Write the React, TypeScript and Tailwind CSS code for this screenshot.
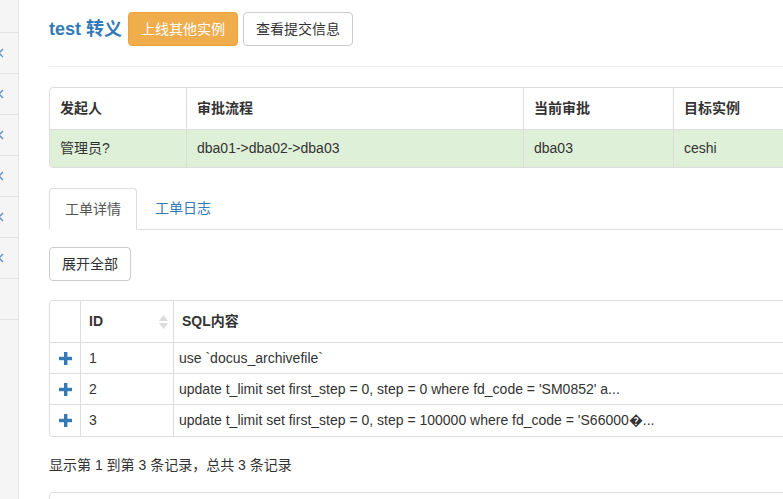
import React from "react";

const font = { fontFamily: '"Liberation Sans", Arial, "Noto Sans CJK SC", sans-serif' };

function Plus() {
  return (
    <svg width="13" height="13" viewBox="0 0 13 13">
      <rect x="5" y="0" width="3.4" height="13" fill="#337ab7" />
      <rect x="0" y="4.8" width="13" height="3.4" fill="#337ab7" />
    </svg>
  );
}

function Sort() {
  return (
    <svg width="9" height="14" viewBox="0 0 9 14">
      <path d="M4.5 0 L9 6 L0 6 Z" fill="#dcdcdc" />
      <path d="M4.5 14 L9 8 L0 8 Z" fill="#dcdcdc" />
    </svg>
  );
}

function Chevron() {
  return (
    <svg width="6" height="10" viewBox="0 0 6 10" className="-ml-[2px]">
      <path d="M5 1 L1 5 L5 9" stroke="#5b8fc7" strokeWidth="1.3" fill="none" />
    </svg>
  );
}

export default function App() {
  const sideRows = [true, true, true, true, true, true, false];
  const sqlRows = [
    ["1", "use `docus_archivefile`"],
    ["2", "update t_limit set first_step = 0, step = 0 where fd_code = 'SM0852' a..."],
    ["3", "update t_limit set first_step = 0, step = 100000 where fd_code = 'S66000\uFFFD..."],
  ];
  return (
    <div className="flex w-[783px] h-[499px] overflow-hidden bg-white text-[14px] text-[#333]" style={font}>
      <div className="w-[19px] shrink-0 bg-[#f5f5f5] border-r border-[#e5e5e5]">
        <div className="h-[33px] border-b border-[#e3e3e3]" />
        {sideRows.map((c, i) => (
          <div key={i} className="h-[41px] border-b border-[#e3e3e3] flex items-center">
            {c ? <Chevron /> : null}
          </div>
        ))}
      </div>
      <div className="pl-[30px] w-[820px] shrink-0">
        <div className="flex items-center mt-[12px] h-[34px]">
          <span className="text-[18px] font-bold text-[#337ab7] mr-[6px]">test 转义</span>
          <button className="h-[34px] px-[12px] rounded-[4px] bg-[#f0ad4e] border border-[#eea236] text-white text-[14px]">上线其他实例</button>
          <button className="h-[34px] px-[12px] ml-[5px] rounded-[4px] bg-white border border-[#ccc] text-[#333] text-[14px]">查看提交信息</button>
        </div>
        <div className="mt-[20px] border-t border-[#eee]" />
        <div className="mt-[20px] border border-[#ddd] rounded-[4px] overflow-hidden">
          <div className="flex h-[42px] font-bold border-b border-[#ddd]">
            <div className="w-[137px] pl-[10px] flex items-center border-r border-[#ddd]">发起人</div>
            <div className="w-[337px] pl-[10px] flex items-center border-r border-[#ddd]">审批流程</div>
            <div className="w-[150px] pl-[10px] flex items-center border-r border-[#ddd]">当前审批</div>
            <div className="flex-1 pl-[10px] flex items-center">目标实例</div>
          </div>
          <div className="flex h-[37px] bg-[#dff0d8]">
            <div className="w-[137px] pl-[10px] flex items-center border-r border-[#ddd]">管理员?</div>
            <div className="w-[337px] pl-[10px] flex items-center border-r border-[#ddd]">dba01-&gt;dba02-&gt;dba03</div>
            <div className="w-[150px] pl-[10px] flex items-center border-r border-[#ddd]">dba03</div>
            <div className="flex-1 pl-[10px] flex items-center">ceshi</div>
          </div>
        </div>
        <div className="mt-[20px] flex border-b border-[#ddd] h-[42px]">
          <div className="h-[42px] -mb-px px-[15px] flex items-center border border-[#ddd] border-b-white bg-white rounded-t-[4px] text-[#555]">工单详情</div>
          <div className="h-[41px] ml-[2px] px-[16px] flex items-center text-[#337ab7]">工单日志</div>
        </div>
        <div className="mt-[17px]">
          <button className="h-[34px] px-[12px] rounded-[4px] bg-white border border-[#ccc] text-[#333] text-[14px]">展开全部</button>
        </div>
        <div className="mt-[19px] border border-[#ddd] rounded-[4px] overflow-hidden">
          <div className="flex h-[42px] font-bold border-b border-[#ddd]">
            <div className="w-[31px] border-r border-[#ddd]" />
            <div className="w-[93px] pl-[8px] pr-[5px] flex items-center justify-between border-r border-[#ddd]">
              <span>ID</span>
              <Sort />
            </div>
            <div className="flex-1 pl-[8px] flex items-center">SQL内容</div>
          </div>
          {sqlRows.map((r, i) => (
            <div key={i} className={"flex h-[31px]" + (i < sqlRows.length - 1 ? " border-b border-[#ddd]" : "")}>
              <div className="w-[31px] border-r border-[#ddd] flex items-center justify-center">
                <Plus />
              </div>
              <div className="w-[93px] pl-[8px] flex items-center border-r border-[#ddd]">{r[0]}</div>
              <div className="flex-1 pl-[5px] flex items-center whitespace-nowrap">{r[1]}</div>
            </div>
          ))}
        </div>
        <div className="mt-[18px] h-[20px] flex items-center">显示第 1 到第 3 条记录，总共 3 条记录</div>
        <div className="mt-[17px] h-[40px] border border-[#ddd] rounded-[4px]" />
      </div>
    </div>
  );
}
